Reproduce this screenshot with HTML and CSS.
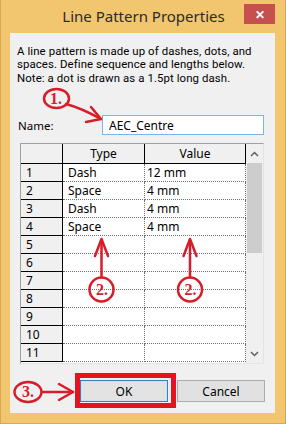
FILE: index.html
```html
<!DOCTYPE html>
<html lang="en">
<head>
    <meta charset="UTF-8">
    <title>Line Pattern Properties</title>
    <link rel="stylesheet" href="styles.css">
</head>
<body>
    <div class="window">
        <div class="titlebar">
            <span class="title">Line Pattern Properties</span>
            <div class="close">&#x2715;</div>
        </div>

        <div class="panel">
            <p class="intro">A line pattern is made up of dashes, dots, and<br>
            spaces. Define sequence and lengths below.<br>
            Note: a dot is drawn as a 1.5pt long dash.</p>

            <div class="name-row">
                <label for="pattern-name">Name:</label>
                <input type="text" id="pattern-name" value="AEC_Centre">
            </div>

            <!-- 线型表格 -->
            <div class="pattern-table">
                <div class="grid">
                    <div class="corner"></div>
                    <div class="head">Type</div>
                    <div class="head">Value</div>

                    <div class="num">1</div><div class="cell type">Dash</div><div class="cell">12 mm</div>
                    <div class="num">2</div><div class="cell type">Space</div><div class="cell">4 mm</div>
                    <div class="num">3</div><div class="cell type">Dash</div><div class="cell">4 mm</div>
                    <div class="num">4</div><div class="cell type">Space</div><div class="cell">4 mm</div>
                    <div class="num">5</div><div class="cell type"></div><div class="cell"></div>
                    <div class="num">6</div><div class="cell type"></div><div class="cell"></div>
                    <div class="num">7</div><div class="cell type"></div><div class="cell"></div>
                    <div class="num">8</div><div class="cell type"></div><div class="cell"></div>
                    <div class="num">9</div><div class="cell type"></div><div class="cell"></div>
                    <div class="num">10</div><div class="cell type"></div><div class="cell"></div>
                    <div class="num">11</div><div class="cell type"></div><div class="cell"></div>
                </div>
                <div class="scrollbar">
                    <div class="arrow">
                        <svg width="9" height="6" viewBox="0 0 9 6"><path d="M1 5 L4.5 1.5 L8 5" fill="none" stroke="#606060" stroke-width="1.5"/></svg>
                    </div>
                    <div class="thumb"></div>
                    <div class="track"></div>
                    <div class="arrow">
                        <svg width="9" height="6" viewBox="0 0 9 6"><path d="M1 1 L4.5 4.5 L8 1" fill="none" stroke="#606060" stroke-width="1.5"/></svg>
                    </div>
                </div>
            </div>

            <div class="buttons">
                <button class="btn default">OK</button>
                <button class="btn">Cancel</button>
            </div>
        </div>

        <!-- 标注 -->
        <svg class="marks" width="286" height="424" viewBox="0 0 286 424">
            <g fill="none" stroke="#d81c2a" stroke-width="2.5" stroke-linecap="round" stroke-linejoin="round">
                <ellipse cx="55.5" cy="98.5" rx="12.5" ry="9.5"/>
                <path d="M65 104 Q80 108 100 119"/>
                <path d="M90 107 L100 119 L85 122"/>

                <ellipse cx="100.5" cy="289.5" rx="12" ry="12"/>
                <path d="M100.5 277 L100.5 240"/>
                <path d="M94 256 L100.5 239 L107 256"/>

                <ellipse cx="189" cy="289.5" rx="12" ry="12"/>
                <path d="M189 277 L189 240"/>
                <path d="M182.5 256 L189 239 L195.5 256"/>

                <ellipse cx="27" cy="392" rx="13.5" ry="10"/>
                <path d="M41 392 L72 392"/>
                <path d="M58 384 L72 392 L58 400"/>
            </g>
            <rect x="76.5" y="375.5" width="96" height="30" fill="none" stroke="#e3141f" stroke-width="5"/>
            <g class="mark-num" fill="#d81c2a">
                <text x="55" y="104" text-anchor="middle">1.</text>
                <text x="101" y="295" text-anchor="middle">2.</text>
                <text x="189.5" y="295" text-anchor="middle">2.</text>
                <text x="27" y="397" text-anchor="middle">3.</text>
            </g>
        </svg>
    </div>
</body>
</html>
```

FILE: styles.css
```css
body {
    margin: 0;
    padding: 0;
    font-family: "Noto Sans", "Open Sans", sans-serif;
    font-size: 12px;
    color: #000;
}
.window {
    position: relative;
    width: 286px;
    height: 424px;
    box-sizing: border-box;
    background-color: #f2c56f;
    border: 1px solid #d9a94f;
    border-top: none;
    padding: 0 10px 10px 9px;
}
.titlebar {
    height: 33px;
    display: flex;
    justify-content: center;
    align-items: center;
}
.title {
    font-size: 15px;
    color: #2b2b2b;
    margin-top: -1px;
    margin-left: 2px;
}
.close {
    position: absolute;
    top: 4px;
    right: 10px;
    width: 31px;
    height: 20px;
    background-color: #c74f50;
    color: #fff;
    font-size: 12px;
    font-weight: bold;
    display: flex;
    justify-content: center;
    align-items: center;
}
.panel {
    height: 380px;
    box-sizing: border-box;
    background-color: #f0f0f0;
    padding: 12px 11px 0 7px;
    display: flex;
    flex-direction: column;
}
.intro {
    margin: 0;
    font-family: Roboto, "Noto Sans", sans-serif;
    line-height: 13.4px;
    font-size: 11.4px;
    letter-spacing: 0.1px;
}
.name-row {
    display: flex;
    align-items: center;
    margin-top: 30px;
}
.name-row label {
    margin-left: 1px;
    width: 84px;
    font-size: 11.5px;
}
.name-row input {
    width: 162px;
    height: 20px;
    box-sizing: border-box;
    border: 1px solid #7eb4ea;
    padding: 0 0 0 6px;
    font-family: "Noto Sans", sans-serif;
    font-size: 12px;
    color: #000;
    background-color: #fff;
    outline: none;
}
.pattern-table {
    margin: 8px 0 0 3px;
    width: 244px;
    height: 221px;
    box-sizing: border-box;
    display: flex;
    border-top: 1px solid #a0a0a0;
    border-left: 1px solid #a0a0a0;
    border-right: 1px solid #e3e3e3;
    border-bottom: 1px solid #e3e3e3;
    background-color: #fff;
}
.grid {
    display: grid;
    grid-template-columns: 42px 82px 101px;
    grid-template-rows: 20px;
    grid-auto-rows: 18px;
}
.grid > div {
    box-sizing: border-box;
    line-height: 17px;
    white-space: nowrap;
    overflow: hidden;
}
.corner {
    background-color: #f0f0f0;
    border-right: 1px solid #000;
    border-bottom: 1px solid #000;
}
.head {
    background-color: #f0f0f0;
    border-right: 1px solid #000;
    border-bottom: 1px solid #000;
    text-align: center;
    line-height: 19px !important;
}
.num {
    background-color: #f0f0f0;
    border-right: 1px solid #000;
    border-bottom: 1px solid #000;
    padding-left: 5px;
}
.cell {
    border-right: 1px dotted #707070;
    border-bottom: 1px dotted #707070;
    padding-left: 2px;
}
.cell.type {
    padding-left: 5px;
}
.scrollbar {
    width: 17px;
    display: flex;
    flex-direction: column;
    background-color: #f0f0f0;
}
.arrow {
    height: 19px;
    display: flex;
    justify-content: center;
    align-items: center;
}
.thumb {
    height: 90px;
    margin: 0 1px;
    background-color: #cdcdcd;
}
.track {
    flex: 1;
}
.buttons {
    display: flex;
    justify-content: flex-end;
    gap: 9px;
    margin-top: 16px;
    margin-right: -1px;
}
.btn {
    width: 88px;
    height: 22px;
    box-sizing: border-box;
    border: 1px solid #adadad;
    background-color: #e1e1e1;
    font-family: "Noto Sans", sans-serif;
    font-size: 12px;
    color: #000;
    padding: 0;
}
.btn.default {
    border-color: #3c7fb1;
    background-color: #e3e3e3;
    box-shadow: inset 0 0 0 1px #cde4f7;
}
.marks {
    position: absolute;
    left: 0;
    top: 0;
}
.mark-num {
    font-family: "Liberation Serif", serif;
    font-weight: bold;
    font-size: 16px;
}
```
